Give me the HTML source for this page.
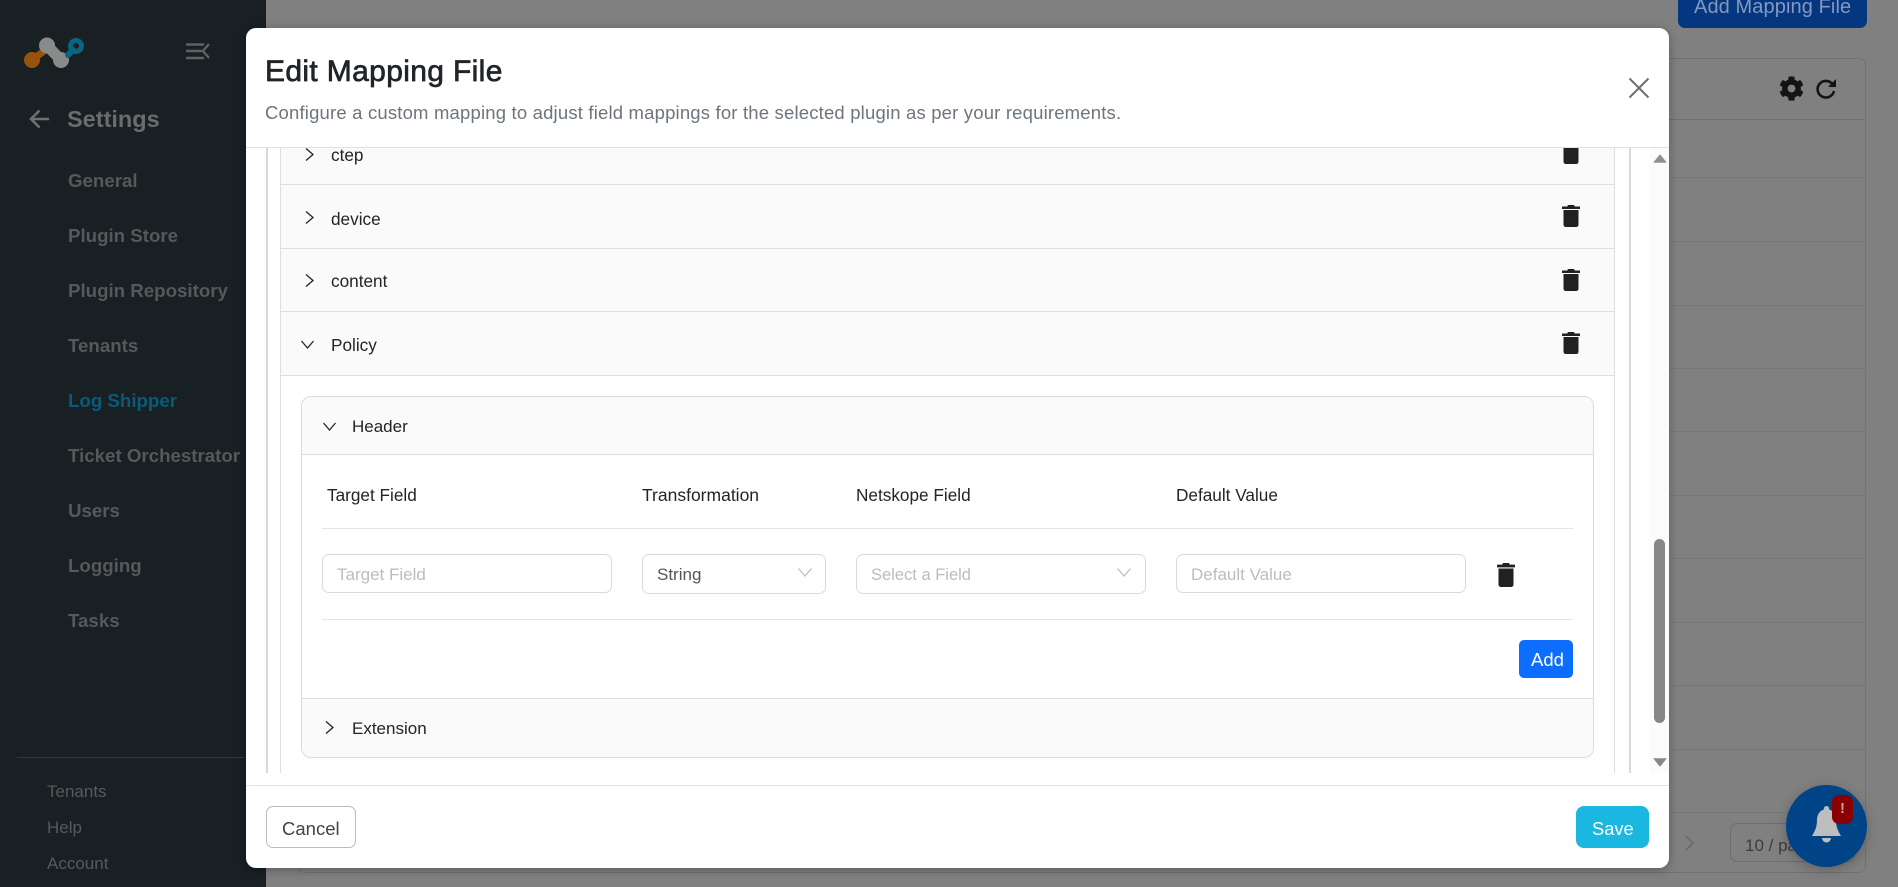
<!DOCTYPE html>
<html><head><meta charset="utf-8"><title>Edit Mapping File</title>
<style>
html,body{margin:0;padding:0}
body{width:1898px;height:887px;position:relative;overflow:hidden;background:#808080;font-family:"Liberation Sans",sans-serif;color:#212529}
.a,.t{position:absolute}
.t{line-height:24px;white-space:nowrap}
.sb{left:68px;font-size:18.7px;font-weight:bold;color:#56585a}
.sf{left:47px;font-size:17px;color:#57595a}
.hl{position:absolute;height:1px}
.r{font-size:17.2px;color:#212529}
.l{font-size:17.2px;color:#212529}
.box{position:absolute;border:1px solid #dadada;border-radius:7px;background:#fff;box-sizing:border-box}
svg{position:absolute;overflow:visible}
</style></head><body>

<!-- background page -->
<div class="a" style="left:1678px;top:-10px;width:189px;height:38px;background:#053781;border-radius:0 0 7px 7px"></div>
<div class="t" style="left:1694px;top:-5px;font-size:20px;letter-spacing:.1px;color:#8499bb">Add Mapping File</div>
<div class="a" style="left:298px;top:58px;width:1568px;height:815px;box-sizing:border-box;border:1px solid #727272;border-radius:7px"></div>
<div class="hl" style="left:298px;top:119px;width:1568px;background:#707070"></div>
<div class="hl" style="left:298px;top:177px;width:1568px;background:#777"></div>
<div class="hl" style="left:298px;top:241px;width:1568px;background:#777"></div>
<div class="hl" style="left:298px;top:305px;width:1568px;background:#777"></div>
<div class="hl" style="left:298px;top:368px;width:1568px;background:#777"></div>
<div class="hl" style="left:298px;top:431px;width:1568px;background:#777"></div>
<div class="hl" style="left:298px;top:495px;width:1568px;background:#777"></div>
<div class="hl" style="left:298px;top:558px;width:1568px;background:#777"></div>
<div class="hl" style="left:298px;top:622px;width:1568px;background:#777"></div>
<div class="hl" style="left:298px;top:685px;width:1568px;background:#777"></div>
<div class="hl" style="left:298px;top:749px;width:1568px;background:#777"></div>
<div class="hl" style="left:298px;top:812px;width:1568px;background:#777"></div>
<svg style="left:1779px;top:76px" width="25" height="25" viewBox="0 0 512 512"><path fill="#141414" d="M487.4 315.7l-42.6-24.6c4.3-23.2 4.3-47 0-70.2l42.6-24.6c4.9-2.8 7.1-8.6 5.5-14-11.1-35.6-30-67.8-54.7-94.6-3.8-4.1-10-5.1-14.8-2.3L380.8 110c-17.9-15.4-38.5-27.3-60.8-35.1V25.8c0-5.6-3.9-10.5-9.4-11.7-36.7-8.2-74.3-7.8-109.2 0-5.5 1.2-9.4 6.1-9.4 11.7V75c-22.2 7.9-42.8 19.8-60.8 35.1L88.7 85.5c-4.9-2.8-11-1.9-14.8 2.3-24.7 26.7-43.6 58.9-54.7 94.6-1.7 5.4.6 11.2 5.5 14L67.3 221c-4.3 23.2-4.3 47 0 70.2l-42.6 24.6c-4.9 2.8-7.1 8.6-5.5 14 11.1 35.6 30 67.8 54.7 94.6 3.8 4.1 10 5.1 14.8 2.3l42.6-24.6c17.9 15.4 38.5 27.3 60.8 35.1v49.2c0 5.6 3.9 10.5 9.4 11.7 36.7 8.2 74.3 7.8 109.2 0 5.5-1.2 9.4-6.1 9.4-11.7v-49.2c22.2-7.9 42.8-19.8 60.8-35.1l42.6 24.6c4.9 2.8 11 1.9 14.8-2.3 24.7-26.7 43.6-58.9 54.7-94.6 1.5-5.5-.7-11.3-5.6-14.1zM256 336c-44.1 0-80-35.9-80-80s35.9-80 80-80 80 35.9 80 80-35.9 80-80 80z"/></svg>
<svg style="left:1815px;top:78px" width="22" height="22" viewBox="0 0 22 22"><path d="M17.5 6.2A8.3 8.3 0 1 0 19 13" fill="none" stroke="#141414" stroke-width="2.6"/><path d="M21 1v8h-8z" fill="#141414"/></svg>
<svg style="left:1684px;top:835px" width="12" height="16" viewBox="0 0 12 16"><path d="M2 1l7 7-7 7" fill="none" stroke="#666" stroke-width="1.4"/></svg>
<div class="a" style="left:1730px;top:823px;width:125px;height:39px;box-sizing:border-box;border:1px solid #6e6e6e;border-radius:7px"></div>
<div class="t" style="left:1745px;top:834px;font-size:17px;color:#3c3c3c">10 / page</div>

<!-- sidebar -->
<div class="a" style="left:0;top:0;width:266px;height:887px;background:#182024"></div>
<svg style="left:0;top:0" width="266" height="130" viewBox="0 0 266 130">
<path d="M32 60L44 51" stroke="#97520c" stroke-width="7" stroke-linecap="round"/>
<circle cx="32" cy="60" r="8" fill="#97520c"/>
<circle cx="47" cy="45.500" r="8" fill="#8a8a8a"/>
<circle cx="61" cy="60" r="8" fill="#8a8a8a"/>
<path d="M47 45.500L61 60" stroke="#8a8a8a" stroke-width="11"/>
<path d="M68 55L73 50" stroke="#0a6585" stroke-width="6" stroke-linecap="round"/>
<circle cx="76" cy="46" r="5.500" fill="none" stroke="#0a6585" stroke-width="5"/>
<path d="M186 44.500H204M186 51H202M186 58H204" stroke="#5f6163" stroke-width="2.400"/>
<path d="M209 44L203 51L209 58" fill="none" stroke="#5f6163" stroke-width="2.400"/>
<path d="M49 119H31M39.500 110.500L31 119L39.500 127.500" fill="none" stroke="#6e7071" stroke-width="2.600"/>
</svg>
<div class="t" style="left:67px;top:107px;font-size:23.500px;font-weight:bold;color:#6a6c6d">Settings</div>
<div class="t sb" style="top:169px">General</div>
<div class="t sb" style="top:224px">Plugin Store</div>
<div class="t sb" style="top:279px">Plugin Repository</div>
<div class="t sb" style="top:334px">Tenants</div>
<div class="t sb" style="top:389px;color:#095c78">Log Shipper</div>
<div class="t sb" style="top:444px">Ticket Orchestrator</div>
<div class="t sb" style="top:499px">Users</div>
<div class="t sb" style="top:554px">Logging</div>
<div class="t sb" style="top:609px">Tasks</div>
<div class="hl" style="left:17px;top:757px;width:249px;background:#33393d"></div>
<div class="t sf" style="top:780px">Tenants</div>
<div class="t sf" style="top:816px">Help</div>
<div class="t sf" style="top:852px">Account</div>

<!-- modal -->
<div class="a" style="left:246px;top:28px;width:1423px;height:840px;background:#fff;border-radius:10px;box-shadow:0 2px 10px rgba(0,0,0,.3);overflow:hidden">
  <div class="t" style="left:19px;top:28px;line-height:32px;font-size:30px;color:#212529;-webkit-text-stroke:.7px #212529;letter-spacing:.35px">Edit Mapping File</div>
  <div class="t" style="left:19px;top:73px;font-size:18.5px;letter-spacing:.18px;color:#6c757d">Configure a custom mapping to adjust field mappings for the selected plugin as per your requirements.</div>
  <div class="hl" style="left:0;top:119px;width:1423px;background:#dee2e6"></div>
  <div class="hl" style="left:0;top:757px;width:1423px;background:#dee2e6"></div>
  <svg style="left:1383px;top:50px" width="20" height="20" viewBox="0 0 20 20"><path d="M.5.500L19.500 19.500M19.500.500L.5 19.500" stroke="#6f6f6f" stroke-width="2"/></svg>
  <div class="a" style="left:20px;top:778px;width:90px;height:42px;box-sizing:border-box;border:1px solid #bbb;border-radius:7px"></div>
  <div class="t" style="left:36px;top:789px;font-size:18.5px;color:#444">Cancel</div>
  <div class="a" style="left:1330px;top:778px;width:73px;height:42px;background:#1ab7e0;border-radius:8px"></div>
  <div class="t" style="left:1346px;top:789px;font-size:18.3px;color:#fff">Save</div>
</div>

<!-- modal body (clipped) -->
<div class="a" style="left:246px;top:148px;width:1423px;height:625px;overflow:hidden">
  <div class="a" style="left:20px;top:0;width:2px;height:625px;background:#d8d8d8"></div>
  <div class="a" style="left:1383px;top:0;width:2px;height:625px;background:#d8d8d8"></div>
  <div class="a" style="left:34px;top:0;width:1335px;height:625px;box-sizing:border-box;border:solid #dedede;border-width:0 1px"></div>
  <div class="a" style="left:35px;top:0;width:1333px;height:227px;background:#fafafa"></div>
  <div class="hl" style="left:35px;top:36px;width:1333px;background:#dedede"></div>
  <div class="hl" style="left:35px;top:100px;width:1333px;background:#dedede"></div>
  <div class="hl" style="left:35px;top:163px;width:1333px;background:#dedede"></div>
  <div class="hl" style="left:35px;top:227px;width:1333px;background:#dedede"></div>

  <!-- scrollbar -->
  <div class="a" style="left:1404px;top:0;width:19px;height:625px;background:#fbfbfb"></div>
  <svg style="left:1407px;top:6px" width="14" height="9" viewBox="0 0 14 9"><path d="M7 .5L13.500 8.500H.5z" fill="#909090" stroke="#909090" stroke-width=".5" stroke-linejoin="round"/></svg>
  <svg style="left:1407px;top:610px" width="14" height="9" viewBox="0 0 14 9"><path d="M.5.500H13.500L7 8.500z" fill="#888" stroke="#888" stroke-width=".5" stroke-linejoin="round"/></svg>
  <div class="a" style="left:1408px;top:391px;width:11px;height:184px;background:#868686;border-radius:6px"></div>

  <!-- rows -->
  <div class="t r" style="left:85px;top:-5px">ctep</div>
  <div class="t r" style="left:85px;top:59px">device</div>
  <div class="t r" style="left:85px;top:121px">content</div>
  <div class="t r" style="left:85px;top:185px">Policy</div>
  <svg style="left:59px;top:0" width="10" height="13" viewBox="0 0 10 13"><path d="M1 .5L8 6.500L1 12.500" fill="none" stroke="#212529" stroke-width="1.300"/></svg>
  <svg style="left:59px;top:63px" width="10" height="13" viewBox="0 0 10 13"><path d="M1 .5L8 6.500L1 12.500" fill="none" stroke="#212529" stroke-width="1.300"/></svg>
  <svg style="left:59px;top:126px" width="10" height="13" viewBox="0 0 10 13"><path d="M1 .5L8 6.500L1 12.500" fill="none" stroke="#212529" stroke-width="1.300"/></svg>
  <svg style="left:55px;top:192px" width="13" height="9" viewBox="0 0 13 9"><path d="M.5 1L6.500 8L12.500 1" fill="none" stroke="#212529" stroke-width="1.300"/></svg>

  <!-- trash -->
  <svg style="left:1316px;top:-6px" width="18" height="22" viewBox="0 0 18 22"><path d="M6 0h6l.7 1.500H18v2.500H0V1.500h5.300zM1.500 5h15v14.500q0 2.500-2.500 2.500H4q-2.500 0-2.500-2.500z" fill="#212121"/></svg>
  <svg style="left:1316px;top:57px" width="18" height="22" viewBox="0 0 18 22"><path d="M6 0h6l.7 1.500H18v2.500H0V1.500h5.300zM1.500 5h15v14.500q0 2.500-2.500 2.500H4q-2.500 0-2.500-2.500z" fill="#212121"/></svg>
  <svg style="left:1316px;top:121px" width="18" height="22" viewBox="0 0 18 22"><path d="M6 0h6l.7 1.500H18v2.500H0V1.500h5.300zM1.500 5h15v14.500q0 2.500-2.500 2.500H4q-2.500 0-2.500-2.500z" fill="#212121"/></svg>
  <svg style="left:1316px;top:184px" width="18" height="22" viewBox="0 0 18 22"><path d="M6 0h6l.7 1.500H18v2.500H0V1.500h5.300zM1.500 5h15v14.500q0 2.500-2.500 2.500H4q-2.500 0-2.500-2.500z" fill="#212121"/></svg>

  <!-- inner card -->
  <div class="a" style="left:55px;top:248px;width:1293px;height:362px;box-sizing:border-box;border:1px solid #dbdbdb;border-radius:10px;overflow:hidden">
    <div class="a" style="left:0;top:0;width:1291px;height:57px;background:#fafafa;border-bottom:1px solid #dedede"></div>
    <div class="a" style="left:0;top:301px;width:1291px;height:60px;background:#fafafa;border-top:1px solid #dedede"></div>
  </div>
  <svg style="left:77px;top:274px" width="13" height="9" viewBox="0 0 13 9"><path d="M.5 1L6.500 8L12.500 1" fill="none" stroke="#212529" stroke-width="1.300"/></svg>
  <div class="t" style="left:106px;top:267px;font-size:17px">Header</div>
  <svg style="left:79px;top:573px" width="10" height="13" viewBox="0 0 10 13"><path d="M1 .5L8 6.500L1 12.500" fill="none" stroke="#212529" stroke-width="1.300"/></svg>
  <div class="t" style="left:106px;top:569px;font-size:17px">Extension</div>

  <div class="t l" style="left:81px;top:335px">Target Field</div>
  <div class="t l" style="left:396px;top:335px;font-size:17.5px">Transformation</div>
  <div class="t l" style="left:610px;top:335px">Netskope Field</div>
  <div class="t l" style="left:930px;top:335px">Default Value</div>
  <div class="hl" style="left:76px;top:380px;width:1251px;background:#e5e5e5"></div>
  <div class="hl" style="left:76px;top:471px;width:1251px;background:#e5e5e5"></div>

  <div class="box" style="left:76px;top:406px;width:290px;height:39px"></div>
  <div class="t" style="left:91px;top:415px;font-size:17px;color:#bdbdbd">Target Field</div>
  <div class="box" style="left:396px;top:406px;width:184px;height:40px"></div>
  <div class="t" style="left:411px;top:415px;font-size:17px;color:#555">String</div>
  <svg style="left:552px;top:420px" width="14" height="9" viewBox="0 0 14 9"><path d="M.5.500L7 8L13.500.500" fill="none" stroke="#bdbdbd" stroke-width="1.300"/></svg>
  <div class="box" style="left:610px;top:406px;width:290px;height:40px"></div>
  <div class="t" style="left:625px;top:415px;font-size:16.500px;color:#bdbdbd">Select a Field</div>
  <svg style="left:871px;top:420px" width="14" height="9" viewBox="0 0 14 9"><path d="M.5.500L7 8L13.500.500" fill="none" stroke="#bdbdbd" stroke-width="1.300"/></svg>
  <div class="box" style="left:930px;top:406px;width:290px;height:39px"></div>
  <div class="t" style="left:945px;top:415px;font-size:17px;color:#bdbdbd">Default Value</div>
  <svg style="left:1251px;top:415px" width="18" height="24" viewBox="0 0 18 22" preserveAspectRatio="none"><path d="M6 0h6l.7 1.500H18v2.500H0V1.500h5.300zM1.500 5h15v14.500q0 2.500-2.500 2.500H4q-2.500 0-2.500-2.500z" fill="#212121"/></svg>
  <div class="a" style="left:1273px;top:492px;width:54px;height:38px;background:#0d6efd;border-radius:5px"></div>
  <div class="t" style="left:1285px;top:500px;font-size:18.500px;color:#fff">Add</div>
</div>

<!-- notification bell -->
<div class="a" style="left:1786px;top:785px;width:81px;height:82px;border-radius:50%;background:#004488;box-shadow:0 3px 12px rgba(0,0,0,.25)"></div>
<svg style="left:1812px;top:806px" width="29" height="37" viewBox="0 0 32 37" preserveAspectRatio="none"><path d="M16 0a3 3 0 0 1 3 3.500c5 1.500 7.500 5.500 7.500 11 0 6 2 10 5.500 15.500H0c3.500-5.500 5.500-9.500 5.500-15.500 0-5.500 2.500-9.500 7.500-11A3 3 0 0 1 16 0z" fill="#bdbdbd"/><path d="M11 32h10a5 4.500 0 0 1-10 0z" fill="#bdbdbd"/></svg>
<div class="a" style="left:1832px;top:795px;width:21px;height:29px;background:#8a0000;border-radius:7px"></div>
<div class="t" style="left:1832px;top:797px;width:21px;text-align:center;font-size:15px;font-weight:bold;color:#c9a0a0">!</div>
</body></html>
